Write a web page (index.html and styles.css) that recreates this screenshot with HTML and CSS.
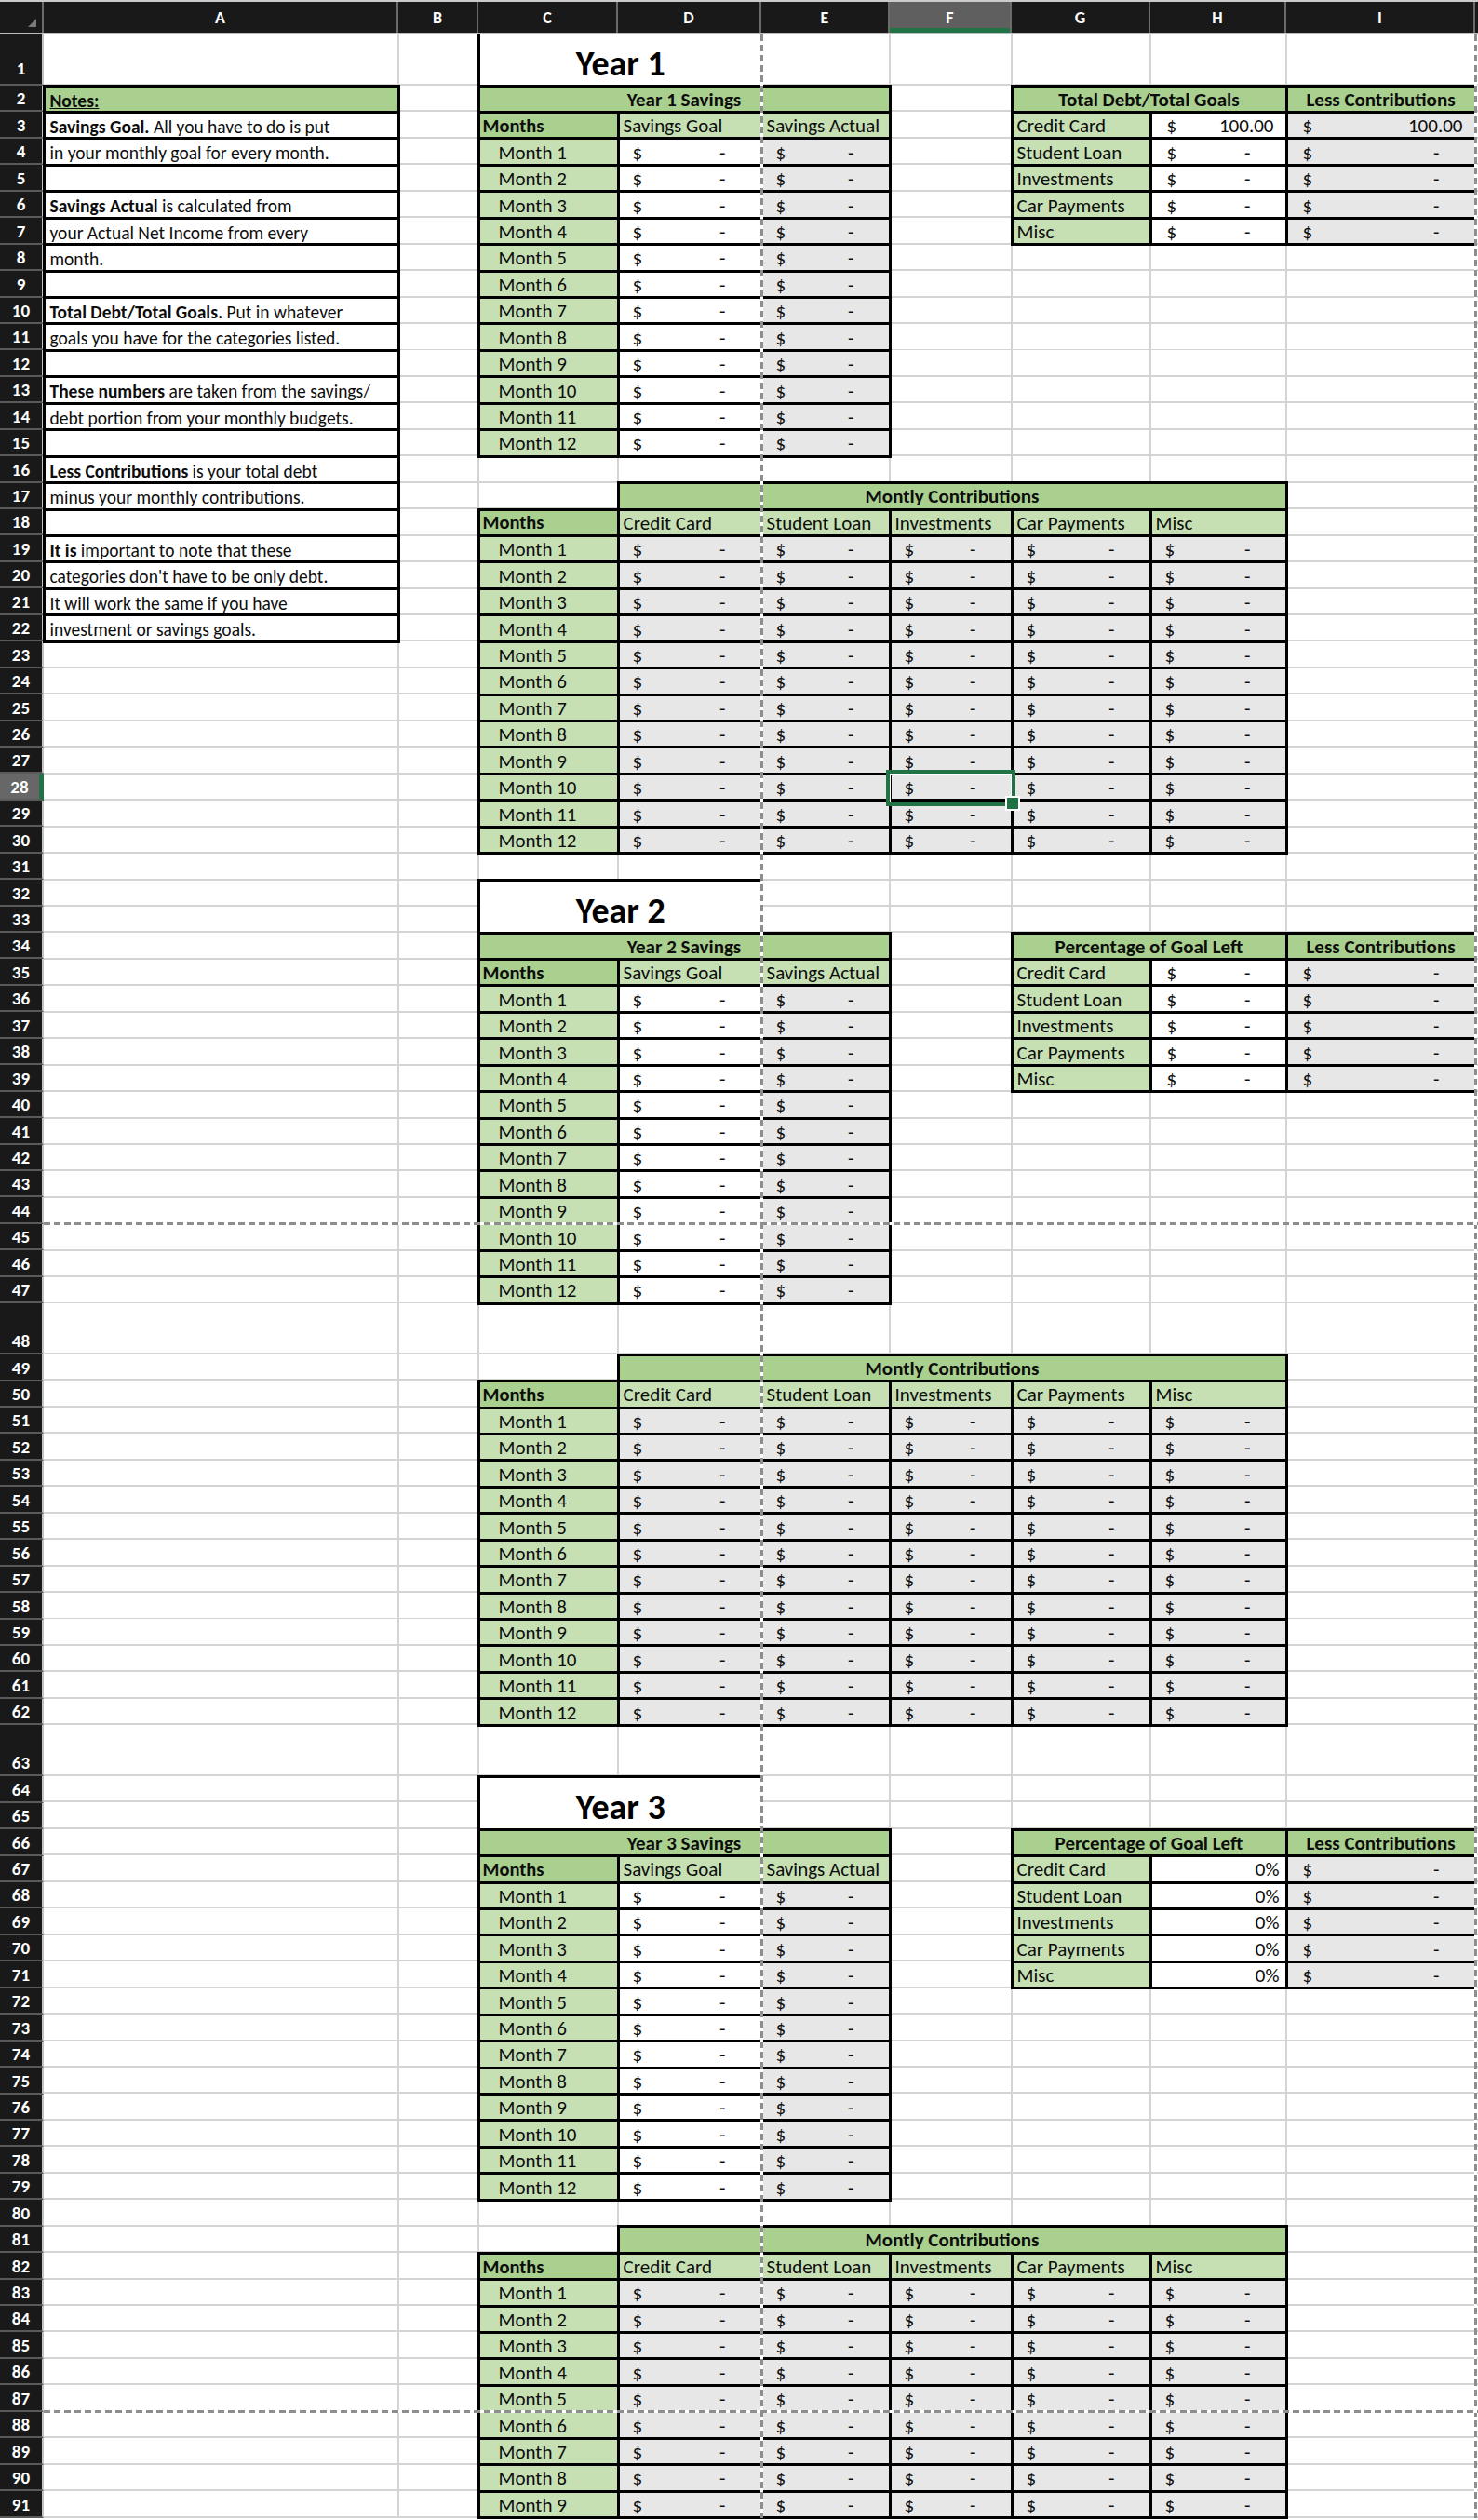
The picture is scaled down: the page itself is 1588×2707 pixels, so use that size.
FILE: index.html
```html
<!DOCTYPE html>
<html lang="en">
<head>
<meta charset="utf-8">
<title>Savings &amp; Debt Goals</title>
<link rel="stylesheet" href="styles.css">
</head>
<body>
<div class="sheet">
  <div class="colhead">
    <div class="corner"><svg width="9" height="9" viewBox="0 0 9 9"><path d="M9 0 L9 9 L0 9 Z" fill="#7a7a7a"/></svg></div>
    <div class="ch">A</div><div class="ch">B</div><div class="ch">C</div><div class="ch">D</div><div class="ch">E</div><div class="ch on">F</div><div class="ch">G</div><div class="ch">H</div><div class="ch">I</div><div class="ch last"></div>
  </div>

  <div class="rh tallrh">1</div><div class="rh">2</div><div class="rh">3</div><div class="rh">4</div><div class="rh">5</div><div class="rh">6</div><div class="rh">7</div><div class="rh">8</div><div class="rh">9</div><div class="rh">10</div>
  <div class="rh">11</div><div class="rh">12</div><div class="rh">13</div><div class="rh">14</div><div class="rh">15</div><div class="rh">16</div><div class="rh">17</div><div class="rh">18</div><div class="rh">19</div><div class="rh">20</div>
  <div class="rh">21</div><div class="rh">22</div><div class="rh">23</div><div class="rh">24</div><div class="rh">25</div><div class="rh">26</div><div class="rh">27</div><div class="rh on">28</div><div class="rh">29</div><div class="rh">30</div>
  <div class="rh">31</div><div class="rh">32</div><div class="rh">33</div><div class="rh">34</div><div class="rh">35</div><div class="rh">36</div><div class="rh">37</div><div class="rh">38</div><div class="rh">39</div><div class="rh">40</div>
  <div class="rh">41</div><div class="rh">42</div><div class="rh">43</div><div class="rh">44</div><div class="rh">45</div><div class="rh">46</div><div class="rh">47</div><div class="rh">48</div><div class="rh">49</div><div class="rh">50</div>
  <div class="rh">51</div><div class="rh">52</div><div class="rh">53</div><div class="rh">54</div><div class="rh">55</div><div class="rh">56</div><div class="rh">57</div><div class="rh">58</div><div class="rh">59</div><div class="rh">60</div>
  <div class="rh">61</div><div class="rh">62</div><div class="rh">63</div><div class="rh">64</div><div class="rh">65</div><div class="rh">66</div><div class="rh">67</div><div class="rh">68</div><div class="rh">69</div><div class="rh">70</div>
  <div class="rh">71</div><div class="rh">72</div><div class="rh">73</div><div class="rh">74</div><div class="rh">75</div><div class="rh">76</div><div class="rh">77</div><div class="rh">78</div><div class="rh">79</div><div class="rh">80</div>
  <div class="rh">81</div><div class="rh">82</div><div class="rh">83</div><div class="rh">84</div><div class="rh">85</div><div class="rh">86</div><div class="rh">87</div><div class="rh">88</div><div class="rh">89</div><div class="rh">90</div>
  <div class="rh">91</div>

  <div class="band tall b-r1"></div>
  <div class="band b-r2"></div>
  <div class="band tall b-r48"></div>
  <div class="band b-r49"></div>
  <div class="band tall b-r63"></div>
  <div class="band b-r64"></div>

  <!-- Notes -->
  <div class="tb notes">
    <div class="nh">Notes:</div>
    <div class="nt"><b>Savings Goal.</b>&nbsp;All you have to do is put</div>
    <div class="nt">in your monthly goal for every month.</div>
    <div class="nt"></div>
    <div class="nt"><b>Savings Actual</b>&nbsp;is calculated from</div>
    <div class="nt">your Actual Net Income from every</div>
    <div class="nt">month.</div>
    <div class="nt"></div>
    <div class="nt"><b>Total Debt/Total Goals.</b>&nbsp;Put in whatever</div>
    <div class="nt">goals you have for the categories listed.</div>
    <div class="nt"></div>
    <div class="nt"><b>These numbers</b>&nbsp;are taken from the savings/</div>
    <div class="nt">debt portion from your monthly budgets.</div>
    <div class="nt"></div>
    <div class="nt"><b>Less Contributions</b>&nbsp;is your total debt</div>
    <div class="nt">minus your monthly contributions.</div>
    <div class="nt"></div>
    <div class="nt"><b>It is</b>&nbsp;important to note that these</div>
    <div class="nt">categories don't have to be only debt.</div>
    <div class="nt">It will work the same if you have</div>
    <div class="nt">investment or savings goals.</div>
  </div>

  <!-- ================= YEAR 1 ================= -->
  <div class="title t1">Year 1</div>
  <div class="tb sav s1">
    <div class="H span3">Year 1 Savings</div>
    <div class="M">Months</div><div class="L">Savings Goal</div><div class="L">Savings Actual</div>
    <div class="mo">Month 1</div><div class="w">$<span>-</span></div><div class="g">$<span>-</span></div>
    <div class="mo">Month 2</div><div class="w">$<span>-</span></div><div class="g">$<span>-</span></div>
    <div class="mo">Month 3</div><div class="w">$<span>-</span></div><div class="g">$<span>-</span></div>
    <div class="mo">Month 4</div><div class="w">$<span>-</span></div><div class="g">$<span>-</span></div>
    <div class="mo">Month 5</div><div class="w">$<span>-</span></div><div class="g">$<span>-</span></div>
    <div class="mo">Month 6</div><div class="w">$<span>-</span></div><div class="g">$<span>-</span></div>
    <div class="mo">Month 7</div><div class="w">$<span>-</span></div><div class="g">$<span>-</span></div>
    <div class="mo">Month 8</div><div class="w">$<span>-</span></div><div class="g">$<span>-</span></div>
    <div class="mo">Month 9</div><div class="w">$<span>-</span></div><div class="g">$<span>-</span></div>
    <div class="mo">Month 10</div><div class="w">$<span>-</span></div><div class="g">$<span>-</span></div>
    <div class="mo">Month 11</div><div class="w">$<span>-</span></div><div class="g">$<span>-</span></div>
    <div class="mo">Month 12</div><div class="w">$<span>-</span></div><div class="g">$<span>-</span></div>
  </div>

  <div class="tb goal g1">
    <div class="H span2">Total Debt/Total Goals</div><div class="H">Less Contributions</div>
    <div class="L">Credit Card</div><div class="w">$<span class="n">100.00</span></div><div class="g">$<span class="n">100.00</span></div>
    <div class="L">Student Loan</div><div class="w">$<span>-</span></div><div class="g">$<span>-</span></div>
    <div class="L">Investments</div><div class="w">$<span>-</span></div><div class="g">$<span>-</span></div>
    <div class="L">Car Payments</div><div class="w">$<span>-</span></div><div class="g">$<span>-</span></div>
    <div class="L">Misc</div><div class="w">$<span>-</span></div><div class="g">$<span>-</span></div>
  </div>

  <div class="tb chd ch1"><div class="H">Montly Contributions</div></div>
  <div class="tb con c1">
    <div class="M">Months</div><div class="L">Credit Card</div><div class="L">Student Loan</div><div class="L">Investments</div><div class="L">Car Payments</div><div class="L">Misc</div>
    <div class="mo">Month 1</div><div class="g">$<span>-</span></div><div class="g">$<span>-</span></div><div class="g">$<span>-</span></div><div class="g">$<span>-</span></div><div class="g">$<span>-</span></div>
    <div class="mo">Month 2</div><div class="g">$<span>-</span></div><div class="g">$<span>-</span></div><div class="g">$<span>-</span></div><div class="g">$<span>-</span></div><div class="g">$<span>-</span></div>
    <div class="mo">Month 3</div><div class="g">$<span>-</span></div><div class="g">$<span>-</span></div><div class="g">$<span>-</span></div><div class="g">$<span>-</span></div><div class="g">$<span>-</span></div>
    <div class="mo">Month 4</div><div class="g">$<span>-</span></div><div class="g">$<span>-</span></div><div class="g">$<span>-</span></div><div class="g">$<span>-</span></div><div class="g">$<span>-</span></div>
    <div class="mo">Month 5</div><div class="g">$<span>-</span></div><div class="g">$<span>-</span></div><div class="g">$<span>-</span></div><div class="g">$<span>-</span></div><div class="g">$<span>-</span></div>
    <div class="mo">Month 6</div><div class="g">$<span>-</span></div><div class="g">$<span>-</span></div><div class="g">$<span>-</span></div><div class="g">$<span>-</span></div><div class="g">$<span>-</span></div>
    <div class="mo">Month 7</div><div class="g">$<span>-</span></div><div class="g">$<span>-</span></div><div class="g">$<span>-</span></div><div class="g">$<span>-</span></div><div class="g">$<span>-</span></div>
    <div class="mo">Month 8</div><div class="g">$<span>-</span></div><div class="g">$<span>-</span></div><div class="g">$<span>-</span></div><div class="g">$<span>-</span></div><div class="g">$<span>-</span></div>
    <div class="mo">Month 9</div><div class="g">$<span>-</span></div><div class="g">$<span>-</span></div><div class="g">$<span>-</span></div><div class="g">$<span>-</span></div><div class="g">$<span>-</span></div>
    <div class="mo">Month 10</div><div class="g">$<span>-</span></div><div class="g">$<span>-</span></div><div class="g">$<span>-</span></div><div class="g">$<span>-</span></div><div class="g">$<span>-</span></div>
    <div class="mo">Month 11</div><div class="g">$<span>-</span></div><div class="g">$<span>-</span></div><div class="g">$<span>-</span></div><div class="g">$<span>-</span></div><div class="g">$<span>-</span></div>
    <div class="mo">Month 12</div><div class="g">$<span>-</span></div><div class="g">$<span>-</span></div><div class="g">$<span>-</span></div><div class="g">$<span>-</span></div><div class="g">$<span>-</span></div>
  </div>

  <!-- ================= YEAR 2 ================= -->
  <div class="title top t2">Year 2</div>
  <div class="tb sav s2">
    <div class="H span3">Year 2 Savings</div>
    <div class="M">Months</div><div class="L">Savings Goal</div><div class="L">Savings Actual</div>
    <div class="mo">Month 1</div><div class="w">$<span>-</span></div><div class="g">$<span>-</span></div>
    <div class="mo">Month 2</div><div class="w">$<span>-</span></div><div class="g">$<span>-</span></div>
    <div class="mo">Month 3</div><div class="w">$<span>-</span></div><div class="g">$<span>-</span></div>
    <div class="mo">Month 4</div><div class="w">$<span>-</span></div><div class="g">$<span>-</span></div>
    <div class="mo">Month 5</div><div class="w">$<span>-</span></div><div class="g">$<span>-</span></div>
    <div class="mo">Month 6</div><div class="w">$<span>-</span></div><div class="g">$<span>-</span></div>
    <div class="mo">Month 7</div><div class="w">$<span>-</span></div><div class="g">$<span>-</span></div>
    <div class="mo">Month 8</div><div class="w">$<span>-</span></div><div class="g">$<span>-</span></div>
    <div class="mo">Month 9</div><div class="w">$<span>-</span></div><div class="g">$<span>-</span></div>
    <div class="mo">Month 10</div><div class="w">$<span>-</span></div><div class="g">$<span>-</span></div>
    <div class="mo">Month 11</div><div class="w">$<span>-</span></div><div class="g">$<span>-</span></div>
    <div class="mo">Month 12</div><div class="w">$<span>-</span></div><div class="g">$<span>-</span></div>
  </div>

  <div class="tb goal g2">
    <div class="H span2">Percentage of Goal Left</div><div class="H">Less Contributions</div>
    <div class="L">Credit Card</div><div class="w">$<span>-</span></div><div class="g">$<span>-</span></div>
    <div class="L">Student Loan</div><div class="w">$<span>-</span></div><div class="g">$<span>-</span></div>
    <div class="L">Investments</div><div class="w">$<span>-</span></div><div class="g">$<span>-</span></div>
    <div class="L">Car Payments</div><div class="w">$<span>-</span></div><div class="g">$<span>-</span></div>
    <div class="L">Misc</div><div class="w">$<span>-</span></div><div class="g">$<span>-</span></div>
  </div>

  <div class="tb chd ch2"><div class="H">Montly Contributions</div></div>
  <div class="tb con c2">
    <div class="M">Months</div><div class="L">Credit Card</div><div class="L">Student Loan</div><div class="L">Investments</div><div class="L">Car Payments</div><div class="L">Misc</div>
    <div class="mo">Month 1</div><div class="g">$<span>-</span></div><div class="g">$<span>-</span></div><div class="g">$<span>-</span></div><div class="g">$<span>-</span></div><div class="g">$<span>-</span></div>
    <div class="mo">Month 2</div><div class="g">$<span>-</span></div><div class="g">$<span>-</span></div><div class="g">$<span>-</span></div><div class="g">$<span>-</span></div><div class="g">$<span>-</span></div>
    <div class="mo">Month 3</div><div class="g">$<span>-</span></div><div class="g">$<span>-</span></div><div class="g">$<span>-</span></div><div class="g">$<span>-</span></div><div class="g">$<span>-</span></div>
    <div class="mo">Month 4</div><div class="g">$<span>-</span></div><div class="g">$<span>-</span></div><div class="g">$<span>-</span></div><div class="g">$<span>-</span></div><div class="g">$<span>-</span></div>
    <div class="mo">Month 5</div><div class="g">$<span>-</span></div><div class="g">$<span>-</span></div><div class="g">$<span>-</span></div><div class="g">$<span>-</span></div><div class="g">$<span>-</span></div>
    <div class="mo">Month 6</div><div class="g">$<span>-</span></div><div class="g">$<span>-</span></div><div class="g">$<span>-</span></div><div class="g">$<span>-</span></div><div class="g">$<span>-</span></div>
    <div class="mo">Month 7</div><div class="g">$<span>-</span></div><div class="g">$<span>-</span></div><div class="g">$<span>-</span></div><div class="g">$<span>-</span></div><div class="g">$<span>-</span></div>
    <div class="mo">Month 8</div><div class="g">$<span>-</span></div><div class="g">$<span>-</span></div><div class="g">$<span>-</span></div><div class="g">$<span>-</span></div><div class="g">$<span>-</span></div>
    <div class="mo">Month 9</div><div class="g">$<span>-</span></div><div class="g">$<span>-</span></div><div class="g">$<span>-</span></div><div class="g">$<span>-</span></div><div class="g">$<span>-</span></div>
    <div class="mo">Month 10</div><div class="g">$<span>-</span></div><div class="g">$<span>-</span></div><div class="g">$<span>-</span></div><div class="g">$<span>-</span></div><div class="g">$<span>-</span></div>
    <div class="mo">Month 11</div><div class="g">$<span>-</span></div><div class="g">$<span>-</span></div><div class="g">$<span>-</span></div><div class="g">$<span>-</span></div><div class="g">$<span>-</span></div>
    <div class="mo">Month 12</div><div class="g">$<span>-</span></div><div class="g">$<span>-</span></div><div class="g">$<span>-</span></div><div class="g">$<span>-</span></div><div class="g">$<span>-</span></div>
  </div>

  <!-- ================= YEAR 3 ================= -->
  <div class="title top t3">Year 3</div>
  <div class="tb sav s3">
    <div class="H span3">Year 3 Savings</div>
    <div class="M">Months</div><div class="L">Savings Goal</div><div class="L">Savings Actual</div>
    <div class="mo">Month 1</div><div class="w">$<span>-</span></div><div class="g">$<span>-</span></div>
    <div class="mo">Month 2</div><div class="w">$<span>-</span></div><div class="g">$<span>-</span></div>
    <div class="mo">Month 3</div><div class="w">$<span>-</span></div><div class="g">$<span>-</span></div>
    <div class="mo">Month 4</div><div class="w">$<span>-</span></div><div class="g">$<span>-</span></div>
    <div class="mo">Month 5</div><div class="w">$<span>-</span></div><div class="g">$<span>-</span></div>
    <div class="mo">Month 6</div><div class="w">$<span>-</span></div><div class="g">$<span>-</span></div>
    <div class="mo">Month 7</div><div class="w">$<span>-</span></div><div class="g">$<span>-</span></div>
    <div class="mo">Month 8</div><div class="w">$<span>-</span></div><div class="g">$<span>-</span></div>
    <div class="mo">Month 9</div><div class="w">$<span>-</span></div><div class="g">$<span>-</span></div>
    <div class="mo">Month 10</div><div class="w">$<span>-</span></div><div class="g">$<span>-</span></div>
    <div class="mo">Month 11</div><div class="w">$<span>-</span></div><div class="g">$<span>-</span></div>
    <div class="mo">Month 12</div><div class="w">$<span>-</span></div><div class="g">$<span>-</span></div>
  </div>

  <div class="tb goal g3">
    <div class="H span2">Percentage of Goal Left</div><div class="H">Less Contributions</div>
    <div class="L">Credit Card</div><div class="p">0%</div><div class="g">$<span>-</span></div>
    <div class="L">Student Loan</div><div class="p">0%</div><div class="g">$<span>-</span></div>
    <div class="L">Investments</div><div class="p">0%</div><div class="g">$<span>-</span></div>
    <div class="L">Car Payments</div><div class="p">0%</div><div class="g">$<span>-</span></div>
    <div class="L">Misc</div><div class="p">0%</div><div class="g">$<span>-</span></div>
  </div>

  <div class="tb chd ch3"><div class="H">Montly Contributions</div></div>
  <div class="tb con c3">
    <div class="M">Months</div><div class="L">Credit Card</div><div class="L">Student Loan</div><div class="L">Investments</div><div class="L">Car Payments</div><div class="L">Misc</div>
    <div class="mo">Month 1</div><div class="g">$<span>-</span></div><div class="g">$<span>-</span></div><div class="g">$<span>-</span></div><div class="g">$<span>-</span></div><div class="g">$<span>-</span></div>
    <div class="mo">Month 2</div><div class="g">$<span>-</span></div><div class="g">$<span>-</span></div><div class="g">$<span>-</span></div><div class="g">$<span>-</span></div><div class="g">$<span>-</span></div>
    <div class="mo">Month 3</div><div class="g">$<span>-</span></div><div class="g">$<span>-</span></div><div class="g">$<span>-</span></div><div class="g">$<span>-</span></div><div class="g">$<span>-</span></div>
    <div class="mo">Month 4</div><div class="g">$<span>-</span></div><div class="g">$<span>-</span></div><div class="g">$<span>-</span></div><div class="g">$<span>-</span></div><div class="g">$<span>-</span></div>
    <div class="mo">Month 5</div><div class="g">$<span>-</span></div><div class="g">$<span>-</span></div><div class="g">$<span>-</span></div><div class="g">$<span>-</span></div><div class="g">$<span>-</span></div>
    <div class="mo">Month 6</div><div class="g">$<span>-</span></div><div class="g">$<span>-</span></div><div class="g">$<span>-</span></div><div class="g">$<span>-</span></div><div class="g">$<span>-</span></div>
    <div class="mo">Month 7</div><div class="g">$<span>-</span></div><div class="g">$<span>-</span></div><div class="g">$<span>-</span></div><div class="g">$<span>-</span></div><div class="g">$<span>-</span></div>
    <div class="mo">Month 8</div><div class="g">$<span>-</span></div><div class="g">$<span>-</span></div><div class="g">$<span>-</span></div><div class="g">$<span>-</span></div><div class="g">$<span>-</span></div>
    <div class="mo">Month 9</div><div class="g">$<span>-</span></div><div class="g">$<span>-</span></div><div class="g">$<span>-</span></div><div class="g">$<span>-</span></div><div class="g">$<span>-</span></div>
  </div>

  <!-- overlays: page breaks and active cell -->
  <div class="vb vb1"></div>
  <div class="vb vb2"></div>
  <div class="hb hb1"></div>
  <div class="hb hb2"></div>
  <div class="sel"></div>
</div>
</body>
</html>
```

FILE: styles.css
```css
html, body {
  margin: 0;
  padding: 0;
  background: #fff;
}
body {
  width: 1588px;
  height: 2707px;
  overflow: hidden;
  font-family: Carlito, Calibri, Lato, "Open Sans", sans-serif;
  color: #0d0d0d;
}

.sheet {
  --gl: #d4d4d4;
  display: grid;
  grid-template-columns: 47px 381px 86px 150px 154px 138px 131px 149px 146px 203px 3px;
  grid-template-rows: 37px 55px repeat(46, 28.45px) 55px repeat(14, 28.45px) 55px repeat(28, 28.45px);
  background-color: #fff;
  background-image:
    linear-gradient(var(--gl), var(--gl)), linear-gradient(var(--gl), var(--gl)),
    linear-gradient(var(--gl), var(--gl)), linear-gradient(var(--gl), var(--gl)),
    linear-gradient(var(--gl), var(--gl)), linear-gradient(var(--gl), var(--gl)),
    linear-gradient(var(--gl), var(--gl)), linear-gradient(var(--gl), var(--gl)),
    linear-gradient(var(--gl), var(--gl));
  background-size: 2px 100%;
  background-repeat: no-repeat;
  background-position: 427px 0, 513px 0, 663px 0, 817px 0, 955px 0, 1086px 0, 1235px 0, 1381px 0, 1584px 0;
}

/* column header */
.colhead {
  grid-row: 1;
  grid-column: 1 / -1;
  display: grid;
  grid-template-columns: 47px 381px 86px 150px 154px 138px 131px 149px 146px 203px 3px;
  background: #191919;
  border-top: 2px solid #cbcbcb;
  border-bottom: 2px solid #bdbdbd;
}
.corner {
  display: flex;
  align-items: flex-end;
  justify-content: flex-end;
  padding: 0 6px 6px 0;
  border-right: 2px solid #6b6b6b;
}
.ch {
  display: flex;
  align-items: center;
  justify-content: center;
  color: #fff;
  font-weight: 700;
  font-size: 18px;
  border-right: 2px solid #6b6b6b;
}
.ch.on {
  background: #5f5f5f;
  box-shadow: inset 0 -5px 0 #217346;
}
.ch.last { border-right: 0; }

/* row header */
.rh {
  grid-column: 1;
  display: flex;
  align-items: flex-end;
  justify-content: center;
  padding-bottom: 3px;
  background: #191919;
  color: #fff;
  font-weight: 700;
  font-size: 19px;
  line-height: 1;
  border-bottom: 2px solid #5a5a5a;
  border-right: 2px solid #c4c4c4;
}
.rh.tallrh { padding-bottom: 7px; }
.rh.on {
  background: #676767;
  border-right: 5px solid #217346;
}

/* horizontal grid lines */
.band {
  grid-column: 2 / -1;
  background: repeating-linear-gradient(to bottom, transparent 0, transparent 26.45px, var(--gl) 26.45px, var(--gl) 28.45px);
}
.band.tall {
  background: linear-gradient(to top, var(--gl) 0, var(--gl) 2px, transparent 2px);
}
.b-r1 { grid-row: 2; }
.b-r2 { grid-row: 3 / 49; }
.b-r48 { grid-row: 49; }
.b-r49 { grid-row: 50 / 64; }
.b-r63 { grid-row: 64; }
.b-r64 { grid-row: 65 / 93; }

/* bordered tables */
.tb {
  display: grid;
  grid-auto-rows: 25.45px;
  gap: 3px;
  margin: -1.5px;
  background: #000;
  border: 3px solid #000;
}
.tb > div {
  display: flex;
  align-items: flex-end;
  font-size: 21px;
  line-height: 1.15;
  white-space: nowrap;
  overflow: hidden;
  min-width: 0;
}
.span2 { grid-column: span 2; }
.span3 { grid-column: span 3; }

.tb > .H {
  background: #a9d08e;
  font-weight: 700;
  font-size: 21px;
  justify-content: center;
}
.tb > .M {
  background: #a9d08e;
  font-weight: 700;
  font-size: 20.5px;
  padding-left: 3px;
}
.tb > .L {
  background: #c6e0b4;
  padding-left: 4px;
}
.tb > .mo {
  background: #c6e0b4;
  padding-left: 20px;
}
.tb > .w,
.tb > .g {
  justify-content: space-between;
  padding: 0 12px 0 14px;
}
.tb > .w { background: #fff; }
.tb > .g { background: #e7e7e7; }
.tb > .w span,
.tb > .g span { padding-right: 25px; }
.tb > .w span.n,
.tb > .g span.n { padding-right: 0; }
.tb > .p {
  background: #fff;
  justify-content: flex-end;
  padding-right: 6px;
}

/* notes */
.notes {
  grid-column: 2;
  grid-row: 3 / 24;
  grid-template-columns: 378px;
}
.tb > .nh {
  background: #a9d08e;
  font-weight: 700;
  text-decoration: underline;
  font-size: 19.5px;
  padding-left: 5px;
}
.tb > .nt {
  background: #fff;
  font-size: 19.5px;
  padding-left: 5px;
}

/* year titles */
.title {
  grid-column: 4 / 6;
  display: flex;
  align-items: flex-end;
  justify-content: center;
  margin-left: -1.5px;
  border-left: 3px solid #000;
  background: #fff;
  font-size: 38px;
  font-weight: 700;
  line-height: 1.25;
  color: #000;
}
.title.top {
  margin-top: -1.5px;
  border-top: 3px solid #000;
}
.t1 { grid-row: 2; }
.t2 { grid-row: 33 / 35; }
.t3 { grid-row: 65 / 67; }

/* savings tables */
.sav {
  grid-column: 4 / 7;
  grid-template-columns: 147px 151px 135px;
}
.s1 { grid-row: 3 / 17; }
.s2 { grid-row: 35 / 49; }
.s3 { grid-row: 67 / 81; }

/* goals tables */
.goal {
  grid-column: 8 / 11;
  grid-template-columns: 146px 143px 200px;
}
.goal > .w,
.goal > .g { padding-left: 16px; }
.g1 { grid-row: 3 / 9; }
.g2 { grid-row: 35 / 41; }
.g3 { grid-row: 67 / 73; }

/* contributions */
.chd {
  grid-column: 5 / 10;
  grid-template-columns: 1fr;
}
.ch1 { grid-row: 18; }
.ch2 { grid-row: 50; }
.ch3 { grid-row: 82; }

.con {
  grid-column: 4 / 10;
  grid-template-columns: 147px 151px 135px 128px 146px 143px;
}
.c1 { grid-row: 19 / 32; }
.c2 { grid-row: 51 / 64; }
.c3 { grid-row: 83 / 93; }

/* page break lines */
.vb {
  grid-row: 2 / -1;
  justify-self: start;
  width: 3px;
  margin-left: -1.5px;
  background: repeating-linear-gradient(to bottom, #8e8e8e 0, #8e8e8e 7px, #fff 7px, #fff 11px);
}
.vb1 { grid-column: 6; }
.vb2 { grid-column: 11; }
.hb {
  grid-column: 2 / -1;
  align-self: start;
  height: 3px;
  margin-top: -1.5px;
  background: repeating-linear-gradient(to right, #8e8e8e 0, #8e8e8e 7px, #fff 7px, #fff 11px);
}
.hb1 { grid-row: 46; }
.hb2 { grid-row: 89; }

/* active cell F28 */
.sel {
  grid-row: 29;
  grid-column: 7;
  margin: -4px -4px -6px -4px;
  border: 4px solid #217346;
  box-shadow: inset 0 0 0 1px #fff;
  position: relative;
}
.sel::after {
  content: "";
  position: absolute;
  right: -9px;
  bottom: -9px;
  width: 12px;
  height: 12px;
  background: #217346;
  border: 2px solid #fff;
}
```
